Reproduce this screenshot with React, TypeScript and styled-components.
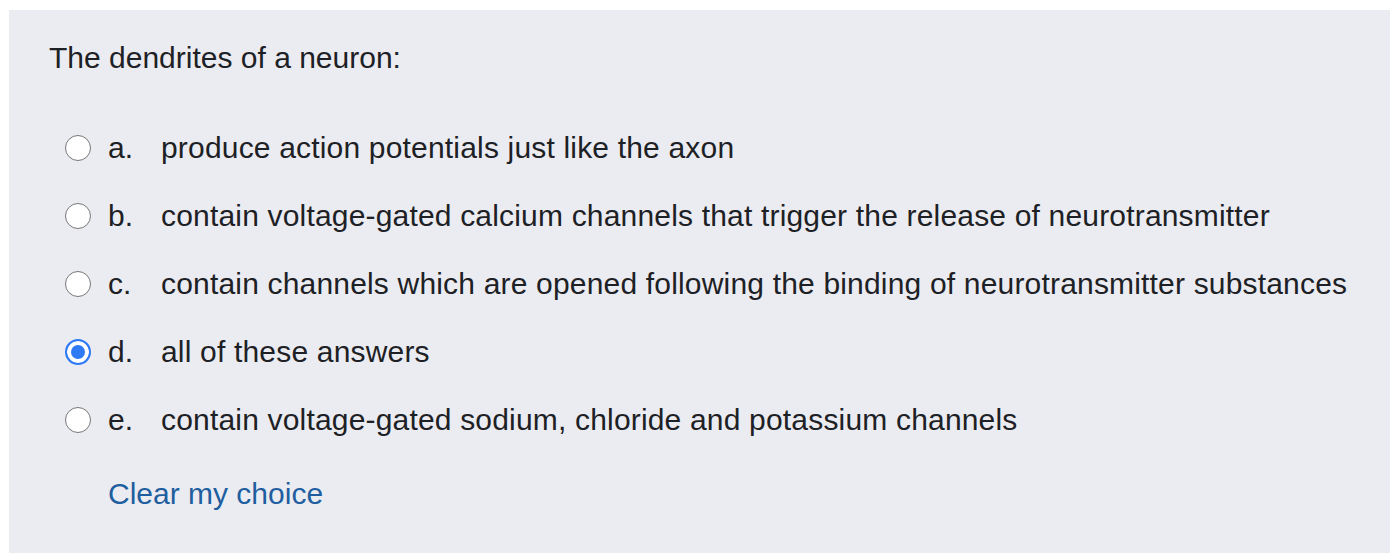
import React, { useState } from "react";
import styled, { createGlobalStyle } from "styled-components";

const Global = createGlobalStyle`
  html, body { margin: 0; padding: 0; background: #ffffff; }
  body { font-family: "Liberation Sans", Arial, Helvetica, sans-serif; }
`;

const Page = styled.div`
  padding: 10px 4px 7px 9px;
`;

const Panel = styled.div`
  background: #ebecf1;
  padding: 25px 40px 37px 40px;
  color: #1d2125;
  font-size: 30px;
  line-height: 45px;
`;

const Question = styled.div`
  margin-bottom: 33px;
`;

const Answers = styled.div`
  display: flex;
  flex-direction: column;
`;

const Row = styled.label`
  display: flex;
  align-items: center;
  height: 68px;
  padding-left: 16px;
  cursor: pointer;
`;

const Radio = styled.input`
  appearance: none;
  -webkit-appearance: none;
  margin: 0 17px 0 0;
  width: 26px;
  height: 26px;
  box-sizing: border-box;
  border-radius: 50%;
  border: 1.5px solid #777777;
  background: #ffffff;
  flex: none;
  position: relative;
  top: 1px;
  &:checked {
    border: 2px solid #2f7af5;
    background: #2f7af5;
    box-shadow: inset 0 0 0 4px #ffffff;
  }
`;

const Letter = styled.span`
  width: 53px;
  flex: none;
`;

const Text = styled.span`
  white-space: nowrap;
  letter-spacing: 0.18px;
`;

const ClearLink = styled.a`
  display: block;
  margin: 18px 0 0 59px;
  color: #1f5e9f;
  text-decoration: none;
  cursor: pointer;
`;

const options = [
  { l: "a.", t: "produce action potentials just like the axon" },
  { l: "b.", t: "contain voltage-gated calcium channels that trigger the release of neurotransmitter" },
  { l: "c.", t: "contain channels which are opened following the binding of neurotransmitter substances" },
  { l: "d.", t: "all of these answers" },
  { l: "e.", t: "contain voltage-gated sodium, chloride and potassium channels" },
];

export default function App() {
  const [sel, setSel] = useState<number | null>(3);
  return (
    <>
      <Global />
      <Page>
        <Panel>
          <Question>The dendrites of a neuron:</Question>
          <Answers>
            {options.map((o, i) => (
              <Row key={o.l}>
                <Radio
                  type="radio"
                  name="q"
                  checked={sel === i}
                  onChange={() => setSel(i)}
                />
                <Letter>{o.l}</Letter>
                <Text>{o.t}</Text>
              </Row>
            ))}
          </Answers>
          <ClearLink onClick={() => setSel(null)}>Clear my choice</ClearLink>
        </Panel>
      </Page>
    </>
  );
}
